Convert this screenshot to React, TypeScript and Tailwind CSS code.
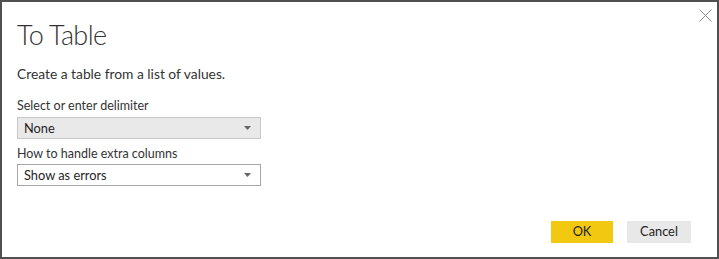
import React from "react";

function Caret() {
  return (
    <svg width="7" height="4" viewBox="0 0 7 4" className="block">
      <path d="M0 0 L7 0 L3.5 4 Z" fill="#666666" />
    </svg>
  );
}

function Select({ value, disabled }: { value: string; disabled?: boolean }) {
  return (
    <div
      className={
        disabled
          ? "w-[244px] h-[22px] flex items-center justify-between pl-[6px] pr-[9px] border border-[#c8c8c8] bg-[#e9e9e9]"
          : "w-[244px] h-[22px] flex items-center justify-between pl-[6px] pr-[9px] border border-[#a6a6a6] bg-white"
      }
    >
      <span className="text-[12.8px] leading-[20px] text-[#252423]">{value}</span>
      <Caret />
    </div>
  );
}

export default function App() {
  return (
    <div
      className="w-[719px] h-[259px] border-2 border-[#505050] bg-white flex flex-col text-[#333333]"
      style={{ fontFamily: 'Lato, "Open Sans", sans-serif' }}
    >
      <div className="flex justify-between items-start">
        <div className="pl-[15px] pt-[16px] text-[27px] leading-[34px] font-light tracking-[-0.6px] text-[#333333]">
          To Table
        </div>
        <svg width="13" height="13" viewBox="0 0 13 13" className="mt-[7px] mr-[5px]">
          <path d="M0.5 0.5 L12.5 12.5 M12.5 0.5 L0.5 12.5" stroke="#8a8a8a" strokeWidth="1" />
        </svg>
      </div>
      <div className="pl-[15px] mt-[12px] text-[13.8px] leading-[20px] text-[#333333]">
        Create a table from a list of values.
      </div>
      <div className="pl-[15px] mt-[13px] flex flex-col">
        <div className="text-[12.5px] leading-[18px] text-[#333333]">Select or enter delimiter</div>
        <div className="mt-[2px]">
          <Select value="None" disabled />
        </div>
        <div className="mt-[6px] text-[12.5px] leading-[18px] text-[#333333]">How to handle extra columns</div>
        <div className="mt-[1px]">
          <Select value="Show as errors" />
        </div>
      </div>
      <div className="mt-auto mb-[14px] mr-[26px] flex justify-end gap-[14px]">
        <div className="w-[62px] h-[22px] bg-[#f2c811] flex items-center justify-center text-[12.8px] text-[#252423]">
          OK
        </div>
        <div className="w-[64px] h-[22px] bg-[#e8e8e8] flex items-center justify-center text-[12.8px] text-[#252423]">
          Cancel
        </div>
      </div>
    </div>
  );
}
